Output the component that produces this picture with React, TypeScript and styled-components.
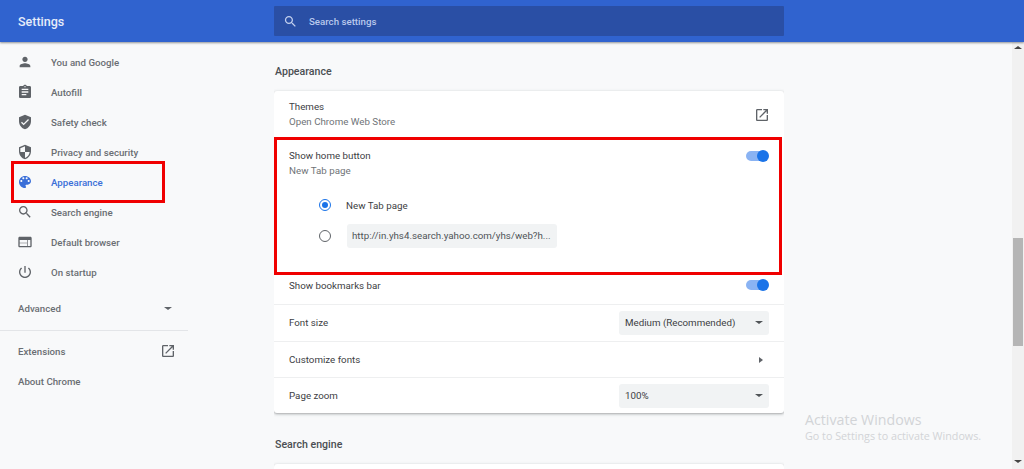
import React from "react";
import styled, { createGlobalStyle } from "styled-components";

const Global = createGlobalStyle`
  html, body { margin: 0; padding: 0; height: 100%; overflow: hidden; background: #f8f9fa; }
  body { font-family: Roboto, "Liberation Sans", sans-serif; }
  #root { height: 100%; }
`;

const P = {
  person: "M12 12c2.21 0 4-1.79 4-4s-1.79-4-4-4-4 1.79-4 4 1.79 4 4 4zm0 2c-2.67 0-8 1.34-8 4v2h16v-2c0-2.66-5.33-4-8-4z",
  assignment: "M19 3h-4.18C14.4 1.84 13.3 1 12 1c-1.3 0-2.4.84-2.82 2H5c-1.1 0-2 .9-2 2v14c0 1.1.9 2 2 2h14c1.1 0 2-.9 2-2V5c0-1.1-.9-2-2-2zm-7 0c.55 0 1 .45 1 1s-.45 1-1 1-1-.45-1-1 .45-1 1-1zm2 14H7v-2h7v2zm3-4H7v-2h10v2zm0-4H7V7h10v2z",
  verified: "M12 1L3 5v6c0 5.55 3.84 10.74 9 12 5.16-1.26 9-6.45 9-12V5l-9-4zm-2 16l-4-4 1.41-1.41L10 14.17l6.59-6.59L18 9l-8 8z",
  security: "M12 1L3 5v6c0 5.55 3.84 10.74 9 12 5.16-1.26 9-6.45 9-12V5l-9-4zm0 10.99h7c-.53 4.12-3.28 7.79-7 8.94V12H5V6.3l7-3.11v8.8z",
  palette: "M12 3c-4.97 0-9 4.03-9 9s4.03 9 9 9c.83 0 1.5-.67 1.5-1.5 0-.39-.15-.74-.39-1.01-.23-.26-.38-.61-.38-.99 0-.83.67-1.5 1.5-1.5H16c2.76 0 5-2.24 5-5 0-4.42-4.03-8-9-8zm-5.5 9c-.83 0-1.5-.67-1.5-1.5S5.67 9 6.5 9 8 9.67 8 10.5 7.33 12 6.5 12zm3-4C8.67 8 8 7.33 8 6.5S8.67 5 9.5 5s1.5.67 1.5 1.5S10.33 8 9.5 8zm5 0c-.83 0-1.5-.67-1.5-1.5S13.67 5 14.5 5s1.5.67 1.5 1.5S15.33 8 14.5 8zm3 4c-.83 0-1.5-.67-1.5-1.5S16.67 9 17.5 9s1.5.67 1.5 1.5-.67 1.5-1.5 1.5z",
  search: "M15.5 14h-.79l-.28-.27C15.41 12.59 16 11.11 16 9.5 16 5.91 13.09 3 9.5 3S3 5.91 3 9.5 5.91 16 9.5 16c1.61 0 3.09-.59 4.23-1.57l.27.28v.79l5 4.99L20.49 19l-4.99-5zm-6 0C7.01 14 5 11.99 5 9.5S7.01 5 9.5 5 14 7.01 14 9.5 11.99 14 9.5 14z",
  web: "M20 4H4c-1.1 0-1.99.9-1.99 2L2 18c0 1.1.9 2 2 2h16c1.1 0 2-.9 2-2V6c0-1.1-.9-2-2-2zm-5 14H4v-4h11v4zm0-5H4V9h11v4zm5 5h-4V9h4v9z",
  power: "M13 3h-2v10h2V3zm4.83 2.17l-1.42 1.42C17.99 7.86 19 9.81 19 12c0 3.87-3.13 7-7 7s-7-3.13-7-7c0-2.19 1.01-4.14 2.58-5.42L6.17 5.17C4.23 6.82 3 9.26 3 12c0 4.97 4.03 9 9 9s9-4.03 9-9c0-2.74-1.23-5.18-3.17-6.83z",
  open: "M19 19H5V5h7V3H5c-1.11 0-2 .9-2 2v14c0 1.1.89 2 2 2h14c1.1 0 2-.9 2-2v-7h-2v7zM14 3v2h3.59l-9.83 9.83 1.41 1.41L19 6.41V10h2V3h-7z",
};

const Icon = ({ d, size = 16, color = "#5f6368" }: { d: string; size?: number; color?: string }) => (
  <svg width={size} height={size} viewBox="0 0 24 24" fill={color} style={{ flex: "none", display: "block" }}>
    <path d={d} />
  </svg>
);

const Page = styled.div`
  height: 469px;
  width: 1024px;
  display: grid;
  grid-template-rows: 42px minmax(0, 1fr);
  overflow: hidden;
`;

const Header = styled.header`
  position: relative;
  z-index: 2;
  display: flex;
  align-items: center;
  background: #3063cf;
  box-shadow: 0 1px 2px rgba(60, 64, 67, 0.55);
`;

const Brand = styled.div`
  width: 274px;
  box-sizing: border-box;
  padding-left: 18px;
  color: #e6edfa;
  font-size: 12.5px;
  font-weight: 500;
`;

const SearchBox = styled.div`
  width: 510px;
  height: 30px;
  display: flex;
  align-items: center;
  gap: 11px;
  padding-left: 9px;
  box-sizing: border-box;
  background: #2a4fa5;
  color: #b9c9ec;
  font-size: 9.7px;
  font-weight: 500;
  border-radius: 1px;
`;

const Body = styled.div`
  display: grid;
  grid-template-columns: 188px 86px 510px 228px 12px;
  grid-template-rows: minmax(0, 1fr);
  min-height: 0;
  overflow: hidden;
`;

const Side = styled.nav`
  padding-top: 5px;
  display: flex;
  flex-direction: column;
  overflow: hidden;
`;

const NavItem = styled.div<{ $active?: boolean }>`
  position: relative;
  height: 30px;
  flex: none;
  display: flex;
  align-items: center;
  gap: 18px;
  padding-left: 17px;
  font-size: 9.7px;
  font-weight: 500;
  color: ${(p) => (p.$active ? "#3a6fd8" : "#6a6e73")};
`;

const SideRow = styled.div`
  height: 30px;
  flex: none;
  display: flex;
  align-items: center;
  justify-content: space-between;
  padding: 0 12px 0 18px;
  font-size: 9.7px;
  font-weight: 500;
  color: #6a6e73;
`;

const AdvancedRow = styled(SideRow)`
  margin-top: 6px;
  padding-right: 16px;
`;

const SideRule = styled.div`
  height: 1px;
  flex: none;
  margin: 7px 0 5px;
  background: #e3e5e8;
`;

const Caret = styled.span<{ $dir?: "down" | "right"; $color?: string }>`
  width: 0;
  height: 0;
  flex: none;
  ${(p) =>
    p.$dir === "right"
      ? `border-top: 3px solid transparent; border-bottom: 3px solid transparent; border-left: 4px solid ${p.$color || "#5f6368"}; margin-right: 6px;`
      : `border-left: 4px solid transparent; border-right: 4px solid transparent; border-top: 3px solid ${p.$color || "#5f6368"};`}
`;

const RedFrame = styled.div`
  position: absolute;
  border: 3px solid #f00000;
  box-sizing: border-box;
  pointer-events: none;
`;

const NavFrame = styled(RedFrame)`
  left: 11px;
  width: 154px;
  top: -6px;
  bottom: -6px;
`;

const HomeFrame = styled(RedFrame)`
  left: 0;
  right: 2px;
  top: -1px;
  bottom: -1px;
`;

const Main = styled.main`
  grid-column: 3;
  padding-top: 20px;
  overflow: hidden;
`;

const SectionTitle = styled.h2`
  margin: 0 0 9px 1px;
  height: 20px;
  line-height: 20px;
  font-size: 10.6px;
  font-weight: 500;
  color: #4a4e52;
`;

const Card = styled.section`
  background: #fff;
  border-radius: 3px;
  box-shadow: 0 1px 2px rgba(60, 64, 67, 0.3), 0 1px 3px 1px rgba(60, 64, 67, 0.12);
  margin-bottom: 22px;
`;

const Row = styled.div<{ $h: number; $rule?: boolean; $lift?: number }>`
  height: ${(p) => p.$h}px;
  box-sizing: border-box;
  padding: 0 15px ${(p) => p.$lift || 0}px;
  display: flex;
  align-items: center;
  justify-content: space-between;
  font-size: 9.75px;
  color: #3c4043;
  ${(p) => (p.$rule ? "border-top: 1px solid #eeeff0;" : "")}
`;

const Labels = styled.div`
  display: flex;
  flex-direction: column;
  gap: 3px;
  line-height: 12px;
`;

const Sub = styled.span`
  color: #6f7377;
`;

const OpenSlot = styled.span`
  margin-right: -1px;
`;

const HomeRow = styled.div`
  position: relative;
  height: 136px;
  box-sizing: border-box;
  padding: 12px 15px 0;
  font-size: 9.75px;
  color: #3c4043;
`;

const HomeHead = styled.div`
  display: flex;
  align-items: flex-start;
  justify-content: space-between;
`;

const RadioRow = styled.div<{ $top: number }>`
  display: flex;
  align-items: center;
  height: 24px;
  margin-top: ${(p) => p.$top}px;
  padding-left: 30px;
  gap: 15px;
`;

const Radio = styled.span<{ $on?: boolean }>`
  width: 12px;
  height: 12px;
  box-sizing: border-box;
  border-radius: 50%;
  flex: none;
  border: 1.6px solid ${(p) => (p.$on ? "#1a73e8" : "#5f6368")};
  display: flex;
  align-items: center;
  justify-content: center;
  &::after {
    content: "";
    width: 6px;
    height: 6px;
    border-radius: 50%;
    background: ${(p) => (p.$on ? "#1a73e8" : "transparent")};
  }
`;

const UrlField = styled.div`
  width: 210px;
  height: 24px;
  margin-left: 1px;
  box-sizing: border-box;
  padding: 0 5px;
  background: #f1f3f4;
  border-radius: 3px;
  line-height: 24px;
  color: #4f5357;
  white-space: nowrap;
`;

const Toggle = styled.span`
  position: relative;
  width: 23px;
  height: 12px;
  flex: none;
  display: block;
  &::before {
    content: "";
    position: absolute;
    left: 0;
    right: 3px;
    top: 1px;
    height: 10px;
    border-radius: 5px;
    background: #8ab3f3;
  }
  &::after {
    content: "";
    position: absolute;
    right: 0;
    top: 0;
    width: 12px;
    height: 12px;
    border-radius: 50%;
    background: #1a73e8;
  }
`;

const Select = styled.div`
  width: 150px;
  height: 24px;
  box-sizing: border-box;
  padding: 0 6px;
  background: #f1f3f4;
  border-radius: 3px;
  display: flex;
  align-items: center;
  justify-content: space-between;
  color: #3c4043;
`;

const Watermark = styled.div`
  position: absolute;
  left: 805px;
  top: 411px;
  z-index: 3;
  font-family: "Open Sans", sans-serif;
  color: #d2d4d7;
  pointer-events: none;
`;

const WatermarkTitle = styled.div`
  font-size: 14.2px;
  line-height: 18px;
`;

const WatermarkSub = styled.div`
  font-size: 10.75px;
  line-height: 14px;
`;

const Scrollbar = styled.div`
  grid-column: 5;
  background: #f1f1f1;
  display: flex;
  flex-direction: column;
  align-items: center;
  padding-top: 4px;
`;

const Thumb = styled.div`
  width: 10px;
  height: 108px;
  flex: none;
  margin-top: 189px;
  background: #b5b5b5;
`;

const ArrowUp = styled.span`
  width: 0;
  height: 0;
  flex: none;
  border-left: 4px solid transparent;
  border-right: 4px solid transparent;
  border-bottom: 3px solid #444;
`;

const ArrowDown = styled.span`
  width: 0;
  height: 0;
  flex: none;
  margin-top: 114px;
  border-left: 4px solid transparent;
  border-right: 4px solid transparent;
  border-top: 3px solid #444;
`;

const nav = [
  ["You and Google", P.person],
  ["Autofill", P.assignment],
  ["Safety check", P.verified],
  ["Privacy and security", P.security],
  ["Appearance", P.palette],
  ["Search engine", P.search],
  ["Default browser", P.web],
  ["On startup", P.power],
];

export default function App() {
  return (
    <Page>
      <Global />
      <Header>
        <Brand>Settings</Brand>
        <SearchBox>
          <Icon d={P.search} size={15} color="#c3d0ee" />
          Search settings
        </SearchBox>
      </Header>
      <Body>
        <Side>
          {nav.map(([label, d]) => {
            const active = label === "Appearance";
            return (
              <NavItem key={label} $active={active}>
                <Icon d={d} color={active ? "#3a6fd8" : "#5f6368"} />
                {label}
                {active && <NavFrame />}
              </NavItem>
            );
          })}
          <AdvancedRow>
            Advanced
            <Caret $dir="down" />
          </AdvancedRow>
          <SideRule />
          <SideRow>
            Extensions
            <Icon d={P.open} />
          </SideRow>
          <SideRow>About Chrome</SideRow>
        </Side>
        <Main>
          <SectionTitle>Appearance</SectionTitle>
          <Card>
            <Row $h={47}>
              <Labels>
                <span>Themes</span>
                <Sub>Open Chrome Web Store</Sub>
              </Labels>
              <OpenSlot>
                <Icon d={P.open} />
              </OpenSlot>
            </Row>
            <HomeRow>
              <HomeHead>
                <Labels>
                  <span>Show home button</span>
                  <Sub>New Tab page</Sub>
                </Labels>
                <Toggle />
              </HomeHead>
              <RadioRow $top={16}>
                <Radio $on />
                <span>New Tab page</span>
              </RadioRow>
              <RadioRow $top={7}>
                <Radio />
                <UrlField>http://in.yhs4.search.yahoo.com/yhs/web?h...</UrlField>
              </RadioRow>
              <HomeFrame />
            </HomeRow>
            <Row $h={30} $lift={8}>
              <span>Show bookmarks bar</span>
              <Toggle />
            </Row>
            <Row $h={37} $rule $lift={1}>
              <span>Font size</span>
              <Select>
                Medium (Recommended)
                <Caret $dir="down" $color="#4f5357" />
              </Select>
            </Row>
            <Row $h={36} $rule>
              <span>Customize fonts</span>
              <Caret $dir="right" />
            </Row>
            <Row $h={36} $rule>
              <span>Page zoom</span>
              <Select>
                100%
                <Caret $dir="down" $color="#4f5357" />
              </Select>
            </Row>
          </Card>
          <SectionTitle>Search engine</SectionTitle>
          <Card>
            <Row $h={40} />
          </Card>
        </Main>
        <Scrollbar>
          <ArrowUp />
          <Thumb />
          <ArrowDown />
        </Scrollbar>
      </Body>
      <Watermark>
        <WatermarkTitle>Activate Windows</WatermarkTitle>
        <WatermarkSub>Go to Settings to activate Windows.</WatermarkSub>
      </Watermark>
    </Page>
  );
}
